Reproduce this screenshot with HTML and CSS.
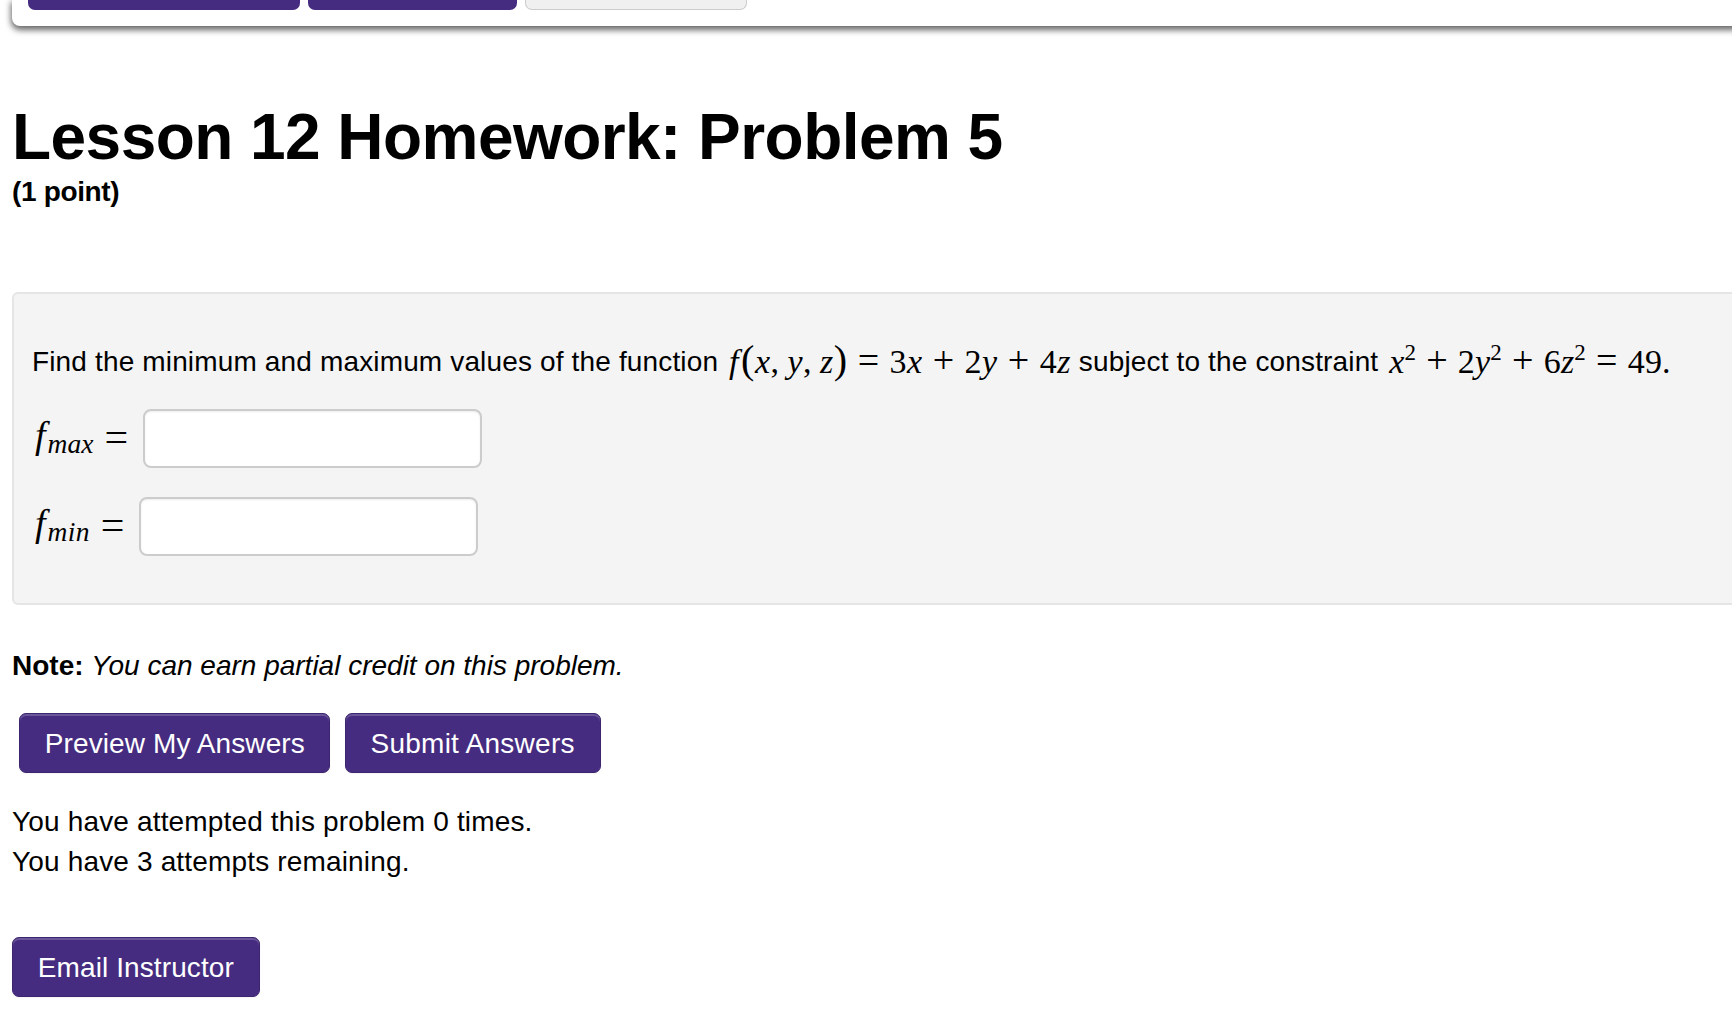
FILE: index.html
```html
<!DOCTYPE html>
<html lang="en">
<head>
  <meta charset="UTF-8" />
  <meta name="viewport" content="width=device-width, initial-scale=1" />
  <title>Lesson 12 Homework: Problem 5</title>
  <link rel="stylesheet" href="styles.css">
</head>
<body>
  <div class="topbar">
    <span class="tab tab-one"></span>
    <span class="tab tab-two"></span>
    <span class="tab tab-three"></span>
  </div>

  <h1>Lesson 12 Homework: Problem 5</h1>
  <div class="points">(1 point)</div>

  <div class="problem">
    <p class="question">Find the minimum and maximum values of the function
      <span class="math"><i class="fn">f</i><span class="paren">(</span><i>x</i>,<i class="sp">y</i>,<i class="sp">z</i><span class="paren">)</span><span class="op">=</span>3<i>x</i><span class="op">+</span>2<i>y</i><span class="op">+</span>4<i>z</i></span>
      subject to the constraint
      <span class="math math-tight"><i>x</i><sup>2</sup><span class="op">+</span>2<i>y</i><sup>2</sup><span class="op">+</span>6<i>z</i><sup>2</sup><span class="op">=</span>49.</span></p>
    <div class="answer">
      <span class="math label"><i class="fn">f</i><sub>max</sub><span class="eq">=</span></span>
      <input type="text" class="field">
    </div>
    <div class="answer">
      <span class="math label"><i class="fn">f</i><sub class="sub-min">min</sub><span class="eq">=</span></span>
      <input type="text" class="field">
    </div>
  </div>

  <p class="note"><b>Note:</b> <em>You can earn partial credit on this problem.</em></p>

  <div class="actions">
    <button class="btn btn-preview">Preview My Answers</button>
    <button class="btn btn-submit">Submit Answers</button>
  </div>

  <p class="attempts">You have attempted this problem 0 times.<br>You have 3 attempts remaining.</p>

  <button class="btn btn-email">Email Instructor</button>
</body>
</html>
```
FILE: styles.css
```css
* {
  box-sizing: border-box;
}
html, body {
  height: 100%;
}
body {
  margin: 0;
  padding: 0 0 0 12px;
  overflow: hidden;
  background: #fff;
  color: #000;
  font-family: "Liberation Sans", Arial, sans-serif;
  font-size: 28px;
  line-height: 40px;
}
.topbar {
  display: flex;
  gap: 8px;
  width: calc(100% + 40px);
  height: 26px;
  padding-left: 16px;
  background: #fff;
  border-radius: 0 0 8px 8px;
  box-shadow: 0 3px 6px 1px rgba(0,0,0,0.6);
}
.tab {
  display: block;
  height: 10px;
  border-radius: 0 0 7px 7px;
  background: #452c80;
}
.tab-one { width: 272px; }
.tab-two { width: 209px; }
.tab-three {
  width: 222px;
  background: #f0f0f0;
  border: 1px solid #ccc;
  border-top: 0;
}
h1 {
  margin: 76px 0 0;
  font-size: 64px;
  line-height: 70px;
  font-weight: bold;
  letter-spacing: -0.55px;
}
.points {
  margin-top: 0;
  font-weight: bold;
  letter-spacing: -0.35px;
}
.problem {
  width: calc(100% + 40px);
  height: 313px;
  margin-top: 80px;
  padding: 46px 18px 0;
  background: #f4f4f4;
  border: 2px solid #e5e5e5;
  border-radius: 6px;
}
.question {
  margin: 0 0 27px;
  white-space: nowrap;
  letter-spacing: 0.15px;
}
.math {
  margin-left: 3px;
  font-family: "Liberation Serif", "Times New Roman", serif;
  font-size: 34px;
  letter-spacing: 0.5px;
  vertical-align: -2px;
}
.math-tight {
  letter-spacing: 0.2px;
}
.math i {
  font-style: italic;
}
.math .fn {
  margin-right: 2px;
}
.math .sp {
  margin-left: 8px;
}
.math .paren {
  font-size: 40px;
}
.math .op {
  margin: 0 10px;
  font-size: 38px;
  line-height: 0;
}
.math sup {
  font-size: 23px;
  line-height: 0;
  vertical-align: 13px;
}
.answer {
  display: flex;
  align-items: center;
  gap: 15px;
  height: 59px;
  margin-bottom: 29px;
}
.label {
  display: block;
  margin-left: 0;
  padding: 0 0 8px 3px;
  white-space: nowrap;
  font-size: 38px;
  letter-spacing: 0;
}
.label sub {
  font-size: 27.5px;
  font-style: italic;
  line-height: 0;
  vertical-align: -5px;
}
.label .sub-min {
  letter-spacing: 0.3px;
}
.label .eq {
  margin-left: 11px;
  font-size: 42px;
  line-height: 0;
  vertical-align: -3px;
}
.field {
  width: 339px;
  height: 59px;
  background: #fff;
  border: 2px solid #ccc;
  border-radius: 8px;
  box-shadow: inset 0 1px 2px rgba(0,0,0,0.08);
}
.note {
  margin: 41px 0 0;
}
.actions {
  display: flex;
  gap: 15px;
  margin: 27px 0 0 7px;
}
.btn {
  display: block;
  height: 60px;
  padding: 2px 24.8px 0;
  color: #fff;
  font-family: "Liberation Sans", Arial, sans-serif;
  font-size: 28px;
  letter-spacing: 0.1px;
  background: #452c80;
  border: 1px solid #3c2670;
  border-radius: 7px;
  box-shadow: inset 0 2px 0 rgba(255,255,255,0.2), 0 1px 2px rgba(0,0,0,0.05);
}
.btn-preview {
  padding-right: 23.8px;
}
.btn-submit {
  letter-spacing: 0.25px;
}
.attempts {
  margin: 29px 0 0;
  letter-spacing: 0.16px;
}
.btn-email {
  margin-top: 55px;
}
```
